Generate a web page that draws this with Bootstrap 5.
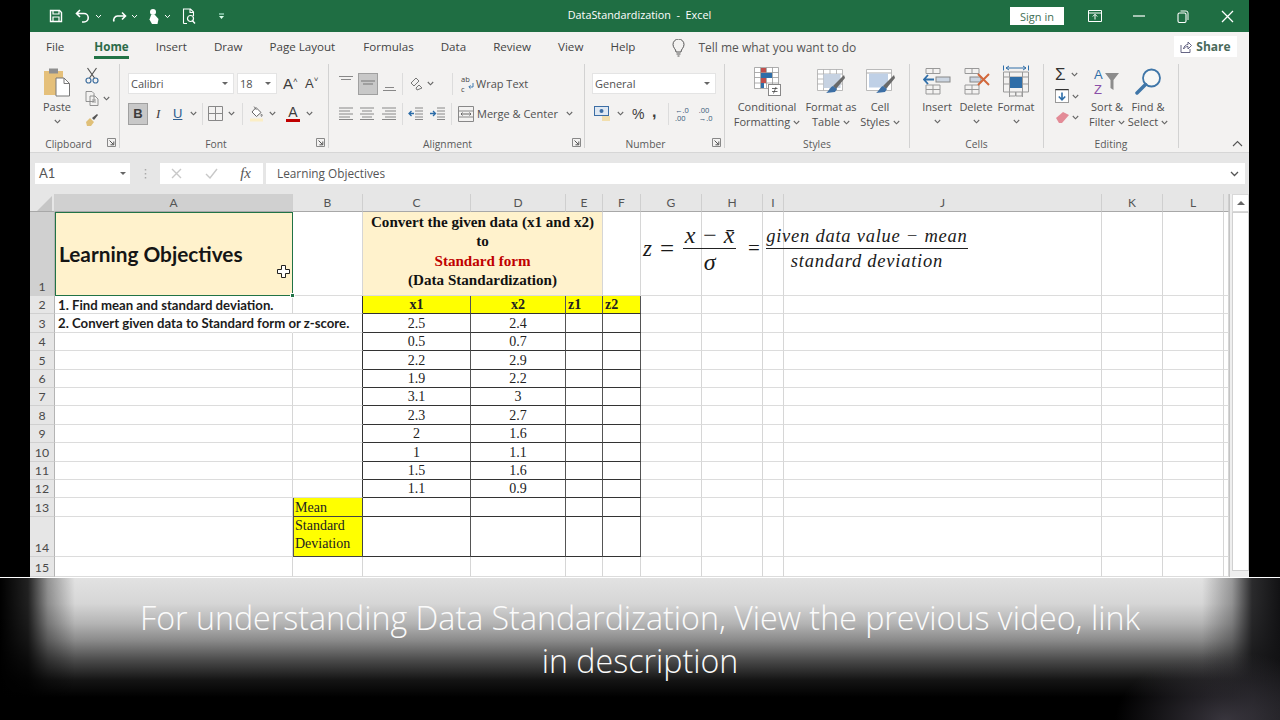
<!DOCTYPE html>
<html lang="en"><head><meta charset="utf-8"><title>DataStandardization - Excel</title>
<link href="https://cdn.jsdelivr.net/npm/bootstrap@5.3.0/dist/css/bootstrap.min.css" rel="stylesheet">
<style>
html,body{margin:0;background:#000;overflow:hidden}
.stage{width:1280px;height:720px;background:#000;font-family:"Open Sans","Noto Sans",sans-serif;color:#444}
.win{width:1219px;height:577px;margin-left:30px;background:#e6e6e6;overflow:hidden;position:relative}
svg{display:block;flex:none}
.cv{width:7px;height:5px}
/* title */
.tbar{height:32px;background:#1f6e43;color:#fff}
.qat{padding-left:19px}
.ttl{position:absolute;left:0;right:0;top:7px;text-align:center;font-size:10.8px;line-height:16px;white-space:pre}
.sign{width:54px;height:18px;background:#fff;color:#3f6f55;font-size:11px;line-height:19px;text-align:center;margin-right:9px}
.wc{width:44px;display:flex;justify-content:center}
/* tabs */
.tabs{height:28px;background:#f3f2f1;font-size:11.6px;color:#444}
.tab{line-height:30px;height:28px;margin-right:27px}
.tab-file{margin-right:30px}
.tab.on{font-weight:700;color:#2b6a48;border-bottom:3px solid #217346;height:27px;line-height:30px}
.tab-fm{margin-left:1px}
.tell{font-size:12px;color:#555;margin-left:13px}
.share{width:63px;height:21px;background:#fff;font-weight:700;color:#4a6a5a;font-size:12px;gap:4px;margin-left:auto;margin-right:12px;margin-top:-7px}
/* ribbon */
.rib{height:93px;background:#f3f2f1;border-bottom:1px solid #d6d6d6;font-size:11px;line-height:15px;color:#505050}
.grp{height:84px;margin-top:4px;border-right:1px solid #d2d2d2;position:relative;flex:none}
.body{height:71px;display:flex}
.glab{height:13px;line-height:13px;font-size:10.3px;text-align:center;color:#5a5a5a;margin-top:3px;white-space:nowrap}
.launch{position:absolute;right:3px;bottom:1px;width:9px;height:9px}
.stack{padding-top:9px;display:flex;flex-direction:column;gap:9px}
.ro{display:flex;align-items:center;height:21px}
.big{display:flex;flex-direction:column;align-items:center;flex:none;white-space:nowrap;text-align:center}
.ic{height:35px;display:flex;align-items:center;justify-content:center}
.big .cv{margin:5px auto 0}
.il{display:inline-block;width:7px;height:5px;vertical-align:1px;margin-left:3px}
.box{background:#fff;height:21px;border:1px solid #e4e4e4;padding-left:2px;line-height:19px;font-size:11px;color:#505050;display:flex;align-items:center;justify-content:space-between;padding-right:5px}
.dn{width:0;height:0;border:3px solid transparent;border-top:3px solid #666;border-bottom:0}
.sel{background:#c8c8c8;border:1px solid #a0a0a0}
.vd{width:1px;height:22px;background:#dcdcdc}
.w-font{width:106px}.w-size{width:40px}.w-gen{width:124px}
.glyph{font-family:"Liberation Sans",sans-serif;color:#3c3c3c;line-height:1}
/* formula */
.fbar{height:41px;padding-top:10px;background:#e6e6e6}
.fb{height:21px;background:#fff;font-size:12px;line-height:21px;color:#555}
.fb-name{width:95px;margin-left:5px;padding:0 4px;font-family:Lato,sans-serif;font-size:13px}
.grip{width:30px;height:21px;display:flex;align-items:center;justify-content:center}
.fb-fx{width:103px;justify-content:space-between;padding:0 12px 0 11px}
.fb-val{width:979px;margin-left:3px;padding:0 6px 0 11px;font-family:"Open Sans",sans-serif;font-size:11.8px}
.fxt{font-family:"Liberation Serif",serif;font-style:italic;font-size:15px;color:#555}
/* sheet */
.sheet{position:relative;height:383px}
.tblx{border-collapse:separate;border-spacing:0;table-layout:fixed;width:1199px;background:#fff;font-family:Lato,sans-serif}
.tblx th,.tblx td{box-sizing:border-box;padding:0;overflow:visible;white-space:nowrap;border-right:1px solid #d6d6d6;border-bottom:1px solid #dcdcdc;line-height:16px}
.tblx thead th{height:18px;background:#e6e6e6;border-bottom:1px solid #a8a8a8;border-right:1px solid #cfcfcf;font-weight:400;font-size:12px;color:#555;text-align:center;vertical-align:middle}
.tblx tbody th{background:#e6e6e6;font-weight:400;font-size:12.3px;color:#4a4a4a;text-align:center;vertical-align:bottom;border-right:1px solid #b4b4b4;border-bottom:1px solid #d0d0d0}
.tblx thead th.pick,.tblx tbody th.pick{background:#d0d0d0}
.corner{width:0;height:0;border-left:15px solid transparent;border-bottom:15px solid #c6c6c6;margin:2px 0 0 7px}
tr.r18{height:18px}tr.r19{height:19px}
.tblx td.a1{background:#fff2cc;border:1.5px solid #217346;position:relative;font-size:20.8px;font-weight:700;color:#151515;padding-left:3px;vertical-align:middle}
.hnd{position:absolute;right:-3px;bottom:-3px;width:5px;height:5px;background:#217346;border:1px solid #fff}
.cur{position:absolute;right:2px;bottom:17px;width:13px;height:13px}
.tblx td.hd{background:#fff2cc;font-family:"Liberation Serif",serif;font-weight:700;font-size:15.1px;line-height:19.1px;text-align:center;color:#111;vertical-align:middle;padding-bottom:4px}
.hd span{color:#c00000}
tr.d td{font-family:"Liberation Serif",serif;font-size:14px;text-align:center;color:#222;vertical-align:middle}
.tblx tr.d td{padding-top:1px}
tr.d td:nth-of-type(2){border-right:1px solid #333}
tr.d td:nth-of-type(n+3):nth-of-type(-n+6){border-bottom:1px solid #333;border-right:1px solid #555}
.tblx tr.d td.ob{font-family:Lato,sans-serif;text-align:left;font-weight:700;font-size:13.2px;color:#1c1c1c;padding-left:3px;padding-top:0}
.tblx tr.d td.nb{border-right-color:transparent}
tr.d td.yl{background:#ff0;font-weight:700;border-bottom:1px solid #444}
tr.d td.yl.lf{text-align:left;padding-left:2px}
.tblx tr.d td.mn{background:#ff0;text-align:left;padding-left:1px;border:1px solid #444;border-top:0;font-size:14px;white-space:normal;border-left:1px solid #555}
.tblx tr.d td.mean{line-height:16px;padding-top:2px;vertical-align:top}
.tblx tr.d td.dev{line-height:18px;padding-bottom:3px;padding-top:0;vertical-align:bottom}
.scr{position:absolute;right:0;top:0;width:20px;height:383px;background:#eee;border-left:1px solid #c4c4c4}
.scr-up{position:absolute;left:2px;right:0;top:0;height:18px;background:#fff;border:1px solid #d8d8d8}
.scr-up i{display:block;width:0;height:0;margin:6px auto;border:4px solid transparent;border-bottom:4px solid #666;border-top:0}
.scr-th{position:absolute;left:2px;right:0;top:18px;height:359px;background:#fff;border:1px solid #d0d0d0}
/* math */
.math{position:absolute;left:613px;top:28px;height:54px;font-family:"Liberation Serif",serif;font-style:italic;color:#1a1a1a;display:flex;align-items:center}
.frac{display:flex;flex-direction:column;align-items:center;justify-content:center;text-align:center;white-space:nowrap}
.frac>div:first-child{border-bottom:1.5px solid #222}
.f1{font-size:24px;width:53px;margin-left:9px}
.f1>div{height:27px;line-height:26px;width:100%}
.f2{font-size:18.5px;width:202px;letter-spacing:.75px}
.f2>div{height:25px;line-height:25px;width:100%}
.zz{font-size:23px}.eq{font-style:normal;font-size:21px}
.eq1{font-size:25px;margin-left:8px}
.eq2{margin-left:12px;margin-right:6px}
/* caption */
.cap{height:143px;width:1280px;border-top:1px solid #fff;text-align:center;color:#fbfbfb;font-family:"Open Sans",sans-serif;font-weight:300;font-size:32.2px;line-height:43px;padding-top:18px;
background:
radial-gradient(110px 70px at 1225px 143px,rgba(70,66,76,.8),rgba(40,40,44,0) 100%),
linear-gradient(90deg,#000 0,rgba(0,0,0,.85) 28px,rgba(0,0,0,.35) 48px,rgba(0,0,0,0) 75px),
linear-gradient(270deg,#121214 0,rgba(18,18,20,.88) 28px,rgba(18,18,20,.35) 48px,rgba(18,18,20,0) 78px),
linear-gradient(180deg,#e2e2e2 0,#d6d6d6 18%,#b4b4b4 32%,#8a8a8a 44%,#4a4a4a 58%,#141414 72%,#000 84%)}
.tq1{margin-left:9px}.tq2{margin-left:10px}.tq3{margin-left:11px}.tq4{margin-left:21px}
.g1{width:90px}.g2{width:209px}.g3{width:256px}.g4{width:140px}.g5{width:185px}.g6{width:134px}.g7{width:135px}
.gl1{padding-right:12px}.gl2{padding-right:16px}.gl3{padding-right:18px}.gl4{padding-right:18px}
.b-paste{width:32px;margin-left:11px}
.tools{margin-left:12px;padding-top:3px}.tcopy{margin-top:7px}.tbr{margin-top:7px}
.ps8{padding-left:8px}.ps10{padding-left:10px}.ps7{padding-left:7px}.ps6{padding-left:6px}.ps65{padding-left:6px}.ps11{padding-left:11px}
.ms3{margin-left:3px}
.m2{margin-left:2px}.m3{margin-left:3px}.m4{margin-left:4px}.m5{margin-left:5px}.m6{margin-left:6px}.m7{margin-left:7px}.m8{margin-left:8px}.m10{margin-left:10px}.m18{margin-left:18px}
.a-up{font-size:15px;margin-left:6px;width:22px}.a-dn{font-size:13px;width:14px}.a-up sup,.a-dn sup{font-size:8px;top:-.7em}
.fbtn{width:20px;height:22px;font-size:13px;line-height:20px;text-align:center}
.fi{font-style:italic;font-size:13px;font-family:"Liberation Serif",serif;margin-left:8px;width:10px}
.fu{font-size:13px;text-decoration:underline;margin-left:7px;width:12px;color:#2f5f8f}
.fc{font-size:14px;display:inline-block;border-bottom:3px solid #c00000;line-height:13px;height:17px;width:14px;text-align:center}
.abtn{width:20px;height:22px;display:flex;align-items:center;justify-content:center}
.abw{font-size:7.5px;line-height:10px;color:#444;width:9px}
.dec{font-size:7.5px;line-height:8px;color:#3a5a7a;white-space:nowrap}
.npc{font-size:14px;margin-left:8px;width:12px}.ncm{font-size:16px;margin-left:8px;width:6px;margin-top:-4px}
.b72{width:72px}.b56{width:56px}.b42{width:42px}.b36{width:36px}.b44{width:44px}.b40{width:40px}
.ic-s{align-items:flex-start;padding-top:4px}
.ecol{width:32px}.e1{height:18px;margin-top:1px}.e2{margin-top:4px;height:18px}.e3{margin-top:3px;height:18px}
.sig{font-size:17px;line-height:1;color:#333;font-family:"Liberation Sans",sans-serif;width:13px}
.tl-wrap{margin-left:10px;height:31px}
.colps{padding:0 6px 5px 0}
.c25{width:25px}.c238{width:238px}.c70{width:70px}.c108{width:108px}.c95{width:95px}.c37{width:37px}.c38{width:38px}.c61{width:61px}.c21{width:21px}.c318{width:318px}.c5{width:5px}
.r84{height:84px}.r40{height:40px}.r20{height:20px}
.wrapic{margin:6px 0 0 -2px}
</style></head>
<body>
<svg width="0" height="0" class="position-absolute"><defs>
<symbol id="cv" viewBox="0 0 7 5"><path d="M.8 1 3.5 3.8 6.2 1" fill="none" stroke="#666" stroke-width="1.1"/></symbol>
<symbol id="cw" viewBox="0 0 7 5"><path d="M1 1 3.5 3.6 6 1" fill="none" stroke="#fff" stroke-width="1"/></symbol>
<symbol id="la" viewBox="0 0 9 9"><path d="M.5 8.5V.5h8v8z" fill="none" stroke="#888"/><path d="M2.5 2.5 6.5 6.5M6.8 3.5v3.3H3.5" fill="none" stroke="#555"/></symbol>
</defs></svg>
<div class="stage">
<div class="win">
 <div class="tbar d-flex align-items-center qat">
  <svg width="14" height="14" viewBox="0 0 14 14" class="me-2"><path d="M1.5 1.5h9l2 2v9h-11z" fill="none" stroke="#fff" stroke-width="1.4"/><path d="M4 1.5v3.5h6V1.5M4 12.5V8h6v4.5" fill="none" stroke="#fff" stroke-width="1.2"/></svg>
  <svg width="16" height="14" viewBox="0 0 16 14" class="ms-1"><path d="M5 1 1.5 4.5 5 8M2 4.5h7a4 4 0 0 1 0 8.5H7" fill="none" stroke="#fff" stroke-width="1.6"/></svg>
  <svg width="7" height="5" class="cv ms-1"><use href="#cw"/></svg>
  <svg width="16" height="14" viewBox="0 0 16 14" class="tq1"><path d="M11 3.5l3.5 3.5L11 10.5M14 7H6.5A4 4 0 0 0 3 12.5" fill="none" stroke="#fff" stroke-width="1.6"/></svg>
  <svg width="7" height="5" class="cv ms-1"><use href="#cw"/></svg>
  <svg width="12" height="17" viewBox="0 0 12 17" class="tq2"><circle cx="5" cy="4" r="3" fill="#fff"/><path d="M3 7h4l3.5 4-1 5H4L1.500 11.500z" fill="#fff"/></svg>
  <svg width="7" height="5" class="cv ms-1"><use href="#cw"/></svg>
  <svg width="15" height="17" viewBox="0 0 15 17" class="tq3"><path d="M1.500 15.500V1h7l3 3v4M8 1v3.500h3.500M1.500 15.500H5" fill="none" stroke="#fff" stroke-width="1.1"/><circle cx="8.500" cy="10.500" r="3" fill="none" stroke="#fff" stroke-width="1.200"/><path d="M10.500 12.800 13 15.500" stroke="#fff" stroke-width="1.400"/></svg>
  <svg width="7" height="7" viewBox="0 0 7 7" class="tq4"><path d="M1 1h5" stroke="#cfe" stroke-width="1"/><path d="M1 3h5L3.500 6z" fill="#dfe"/></svg>
  <div class="ttl">DataStandardization  -  Excel</div>
  <div class="ms-auto d-flex align-items-center sr">
   <div class="sign">Sign in</div>
   <div class="wc"><svg width="14" height="12" viewBox="0 0 14 12"><path d="M.5.5h13v11H.5zM.5 3h13" fill="none" stroke="#fff"/><path d="M7 9.500V4.500M4.800 6.500 7 4.300 9.200 6.500" fill="none" stroke="#fff"/></svg></div>
   <div class="wc"><svg width="12" height="2" viewBox="0 0 12 2"><path d="M0 1h12" stroke="#fff" stroke-width="1.200"/></svg></div>
   <div class="wc"><svg width="12" height="13" viewBox="0 0 12 13"><rect x="1" y="3" width="8" height="9.500" rx="1.500" fill="none" stroke="#fff" stroke-width="1.100"/><path d="M3.500 1h5.500a2 2 0 0 1 2 2v7" fill="none" stroke="#fff" stroke-width="1"/></svg></div>
   <div class="wc"><svg width="13" height="13" viewBox="0 0 13 13"><path d="M1 1 12 12M12 1 1 12" stroke="#fff" stroke-width="1.300"/></svg></div>
  </div>
 </div>
 <div class="tabs d-flex ps-3">
  <div class="tab tab-file">File</div><div class="tab on">Home</div><div class="tab">Insert</div><div class="tab">Draw</div><div class="tab">Page Layout</div><div class="tab tab-fm">Formulas</div><div class="tab">Data</div><div class="tab">Review</div><div class="tab">View</div><div class="tab">Help</div>
  <div class="d-flex align-items-center tl-wrap">
   <svg width="13" height="18" viewBox="0 0 13 18"><path d="M4 13c0-3-3-4-3-7.500a5.500 5.500 0 0 1 11 0C12 9 9 10 9 13zM4.500 15h4M5.500 17h2" fill="none" stroke="#555" stroke-width="1"/></svg>
   <div class="tell">Tell me what you want to do</div>
  </div>
  <div class="share d-flex align-items-center justify-content-center mt-1">
   <svg width="12" height="12" viewBox="0 0 12 12"><path d="M1 4v7.500h9V8M3.500 8C4 5 6 3.500 8 3.500V1l3.500 3.500L8 8V5.500C6 5.500 4.500 6.500 3.500 8z" fill="none" stroke="#557" stroke-width=".9"/></svg>Share
  </div>
 </div>
 <div class="rib d-flex">
  <!-- Clipboard -->
  <div class="grp g1"><div class="body">
    <div class="big b-paste"><div class="ic"><svg width="28" height="30" viewBox="0 0 28 30"><rect x="1" y="4" width="19" height="24" fill="#e5c07a"/><rect x="6" y="1.500" width="9" height="5" fill="#8f8f8f"/><path d="M13 11h8l5.500 5.500V29H13z" fill="#fff" stroke="#777"/><path d="M21 11v5.500h5.500" fill="none" stroke="#777"/></svg></div>
     <div>Paste</div><svg class="cv"><use href="#cv"/></svg></div>
    <div class="d-flex flex-column tools">
     <svg width="14" height="17" viewBox="0 0 14 17"><path d="M2.500 1 9.500 11M11.500 1 4.500 11" stroke="#555" stroke-width="1.200"/><circle cx="3.500" cy="13.500" r="2.500" fill="none" stroke="#3f6f9f" stroke-width="1.200"/><circle cx="10.500" cy="13.500" r="2.500" fill="none" stroke="#3f6f9f" stroke-width="1.200"/></svg>
     <div class="d-flex align-items-center tcopy"><svg width="14" height="15" viewBox="0 0 14 15"><path d="M1 .5h6l2 2v8H1zM5 5h5l3 3v6.500H5z" fill="#f3f2f1" stroke="#888" stroke-width=".9"/><path d="M7 9h4M7 11h4" stroke="#999"/></svg><svg class="cv ms-1"><use href="#cv"/></svg></div>
     <svg class="tbr" width="14" height="14" viewBox="0 0 14 14"><path d="M1 9l4-4 4 4-3 4H2z" fill="#e0c078"/><path d="M7 5l5-4 1 1-4 5z" fill="#555"/></svg>
    </div>
   </div>
   <div class="glab gl1">Clipboard</div><svg class="launch"><use href="#la"/></svg></div>
  <!-- Font -->
  <div class="grp g2"><div class="body stack ps8">
    <div class="ro"><div class="box w-font">Calibri<i class="dn"></i></div><div class="box w-size ms3">18<i class="dn"></i></div>
     <span class="glyph a-up">A<sup>˄</sup></span><span class="glyph a-dn">A<sup>˅</sup></span></div>
    <div class="ro"><div class="sel fbtn glyph fw-bold">B</div><span class="glyph fi">I</span><span class="glyph fu">U</span><svg class="cv m5"><use href="#cv"/></svg><div class="vd m5"></div>
     <svg class="m5" width="15" height="15" viewBox="0 0 15 15"><path d="M.5.5h14v14H.5zM7.500.5v14M.5 7.500h14" fill="none" stroke="#888"/></svg><svg class="cv m5"><use href="#cv"/></svg><div class="vd m7"></div>
     <svg class="m6" width="15" height="17" viewBox="0 0 15 17"><path d="M3 7 7 2.500 12 7.500 7.500 11.500z" fill="#fff" stroke="#666"/><path d="M5 1.500 7.500 5M12.500 9c.8 1 1 2 .3 2.400S11.800 10 12.500 9z" fill="none" stroke="#666" stroke-width=".8"/><path d="M1 15h13" stroke="#fbeec5" stroke-width="3"/></svg><svg class="cv m5"><use href="#cv"/></svg>
     <span class="fc m10"><span class="glyph">A</span></span><svg class="cv m6"><use href="#cv"/></svg></div>
   </div>
   <div class="glab gl2">Font</div><svg class="launch"><use href="#la"/></svg></div>
  <!-- Alignment -->
  <div class="grp g3"><div class="body stack ps10">
    <div class="ro"><svg width="14" height="21" viewBox="0 0 14 21"><path d="M0 3.500h14M2 6.500h10" stroke="#888"/></svg><div class="sel abtn m5"><svg width="14" height="7" viewBox="0 0 14 7"><path d="M0 1h14M2 4h10" stroke="#777"/></svg></div>
     <svg class="m5" width="13" height="21" viewBox="0 0 13 21"><path d="M2 14.500h9M0 17.500h13" stroke="#888"/></svg><div class="vd m6"></div>
     <svg class="m6" width="14" height="14" viewBox="0 0 14 14"><path d="M2 6 7 1l3 3-5 5zM7 11l3-3 3 3-5 2z" fill="none" stroke="#777"/></svg><svg class="cv m4"><use href="#cv"/></svg><div class="vd m18"></div>
     <span class="abw m8">ab<br>c</span><svg class="wrapic" width="6" height="7" viewBox="0 0 6 7"><path d="M5 0v4H1M2.500 2.300.8 4l1.700 1.700" fill="none" stroke="#2f6ea8" stroke-width=".9"/></svg><span class="m2">Wrap Text</span></div>
    <div class="ro"><svg width="14" height="13" viewBox="0 0 14 13"><path d="M0 1h14M0 4h11M0 7h14M0 10h11M0 12.500h14" stroke="#888"/></svg>
     <svg class="m7" width="14" height="13" viewBox="0 0 14 13"><path d="M0 1h14M2 4h10M0 7h14M2 10h10M0 12.500h14" stroke="#888"/></svg>
     <svg class="m8" width="14" height="13" viewBox="0 0 14 13"><path d="M0 1h14M3 4h11M0 7h14M3 10h11M0 12.500h14" stroke="#888"/></svg><div class="vd m6"></div>
     <svg class="m5" width="15" height="13" viewBox="0 0 15 13"><path d="M7 1h8M7 4h8M7 7h8M7 10h8M7 12.500h8" stroke="#888"/><path d="M6 6.500H1M3.500 4 1 6.500 3.500 9" fill="none" stroke="#2b6ca8" stroke-width="1.300"/></svg>
     <svg class="m7" width="15" height="13" viewBox="0 0 15 13"><path d="M7 1h8M7 4h8M7 7h8M7 10h8M7 12.500h8" stroke="#888"/><path d="M0 6.500h5M3 4l2.500 2.500L3 9" fill="none" stroke="#2b6ca8" stroke-width="1.300"/></svg><div class="vd m6"></div>
     <svg class="m6" width="16" height="16" viewBox="0 0 16 16"><path d="M.5.5h15v15H.5zM.5 5h15M.5 11h15" fill="none" stroke="#888"/><path d="M3 8h10M3 8l1.500-1.500M3 8l1.500 1.500M13 8l-1.500-1.500M13 8l-1.500 1.500" fill="none" stroke="#666"/></svg><span class="m3">Merge &amp; Center</span><svg class="cv m8"><use href="#cv"/></svg></div>
   </div>
   <div class="glab gl3">Alignment</div><svg class="launch"><use href="#la"/></svg></div>
  <!-- Number -->
  <div class="grp g4"><div class="body stack ps7">
    <div class="ro"><div class="box w-gen">General<i class="dn"></i></div></div>
    <div class="ro"><svg class="m2" width="17" height="16" viewBox="0 0 17 16"><rect x=".5" y=".5" width="14" height="9" fill="#dfe8f2" stroke="#3c6ea5"/><circle cx="7.500" cy="5" r="2" fill="#3c6ea5"/><rect x="8" y="10" width="8" height="5" fill="#f2dfae"/></svg><svg class="cv m6"><use href="#cv"/></svg><span class="glyph npc">%</span><span class="glyph ncm fw-bold">,</span><div class="vd m10"></div>
      <span class="dec m6">←.0<br>.00</span><span class="dec m10">.00<br>→.0</span></div>
   </div>
   <div class="glab gl4">Number</div><svg class="launch"><use href="#la"/></svg></div>
  <!-- Styles -->
  <div class="grp g5"><div class="body ps6">
    <div class="big b72"><div class="ic"><svg width="27" height="29" viewBox="0 0 27 29"><path d="M.5.500h24v21H.500zM.5 5.500h24M.5 10.500h24M.5 16h24M6.500.5v21M12.500.5v21M18.500.5v21" fill="#fff" stroke="#999" stroke-width=".8"/><rect x="7" y="1" width="5" height="4.500" fill="#c0504d"/><rect x="7" y="6" width="11" height="5" fill="#2f6ea8"/><rect x="7" y="11" width="5" height="5" fill="#c0504d"/><rect x="7" y="16" width="3" height="5" fill="#2f6ea8"/><rect x="14.500" y="17.500" width="12" height="11" fill="#fff" stroke="#888"/><path d="M18 21.500h5.500M18 24.500h5.500M22 20l-2.500 6.500" stroke="#444" stroke-width=".8"/></svg></div><div>Conditional</div><div>Formatting<svg class="il d-inline-block"><use href="#cv"/></svg></div></div>
    <div class="big b56"><div class="ic"><svg width="28" height="26" viewBox="0 0 28 26"><path d="M.5.500h25v21H.500zM.5 5h25M.5 10h25M.5 15h25M6.500.5v21M13 .5v21M19.500.5v21" fill="#fff" stroke="#aaa" stroke-width=".8"/><rect x="6.500" y="5" width="17" height="14" fill="#c6d2e2"/><path d="M27 6 16 17l3 3L28 9z" fill="#6a6a6a"/><path d="M16 17c-3 1-4 5-7 7l9-1 2-3z" fill="#3d6fa5"/></svg></div><div>Format as</div><div>Table<svg class="il d-inline-block"><use href="#cv"/></svg></div></div>
    <div class="big b42"><div class="ic"><svg width="29" height="26" viewBox="0 0 29 26"><path d="M.5.500h25v21H.500z" fill="#fff" stroke="#aaa" stroke-width=".8"/><path d="M.5 4h25" stroke="#aaa"/><rect x="3" y="4.500" width="19" height="14" fill="#bfd0e6"/><path d="M28 6 17 17l3 3L29 9z" fill="#6a6a6a"/><path d="M17 17c-3 1-4 5-7 7l9-1 2-3z" fill="#3d6fa5"/></svg></div><div>Cell</div><div>Styles<svg class="il d-inline-block"><use href="#cv"/></svg></div></div>
   </div>
   <div class="glab">Styles</div></div>
  <!-- Cells -->
  <div class="grp g6"><div class="body ps65">
    <div class="big b42"><div class="ic"><svg width="28" height="27" viewBox="0 0 28 27"><path d="M3 .5h14v5H3zM10 .5v5M3 17h14v9H3zM3 21.500h14M10 17v9" fill="none" stroke="#999"/><rect x="13" y="9" width="14" height="5" fill="#ccd6e2" stroke="#888"/><path d="M11 11.500H1M5 7 1 11.500 5 16" fill="none" stroke="#2f6ea8" stroke-width="1.800"/></svg></div><div>Insert</div><svg class="cv"><use href="#cv"/></svg></div>
    <div class="big b36"><div class="ic"><svg width="28" height="27" viewBox="0 0 28 27"><path d="M3 .5h14v5H3zM10 .5v5M3 17h14v9H3zM3 21.500h14M10 17v9" fill="none" stroke="#999"/><rect x="8" y="9" width="11" height="5" fill="#ccd6e2" stroke="#888"/><path d="M16 6l11 11M27 6 16 17" stroke="#d2683c" stroke-width="2"/></svg></div><div>Delete</div><svg class="cv"><use href="#cv"/></svg></div>
    <div class="big b44"><div class="ic"><svg width="27" height="33" viewBox="0 0 27 33"><path d="M.5 7h25v20H.500zM.5 12h25M.5 19h25M6.500 7v25M19.500 7v25M6.500 27v4h6v-4M13 27v4h6v-4" fill="none" stroke="#999"/><rect x="7" y="12" width="12" height="11" fill="#2f6ea8"/><path d="M3 3h20M3 3l3-2M3 3l3 2M23 3l-3-2M23 3l-3 2M.5.500v5M25.500.5v5" fill="none" stroke="#2f6ea8"/></svg></div><div>Format</div><svg class="cv"><use href="#cv"/></svg></div>
   </div>
   <div class="glab">Cells</div></div>
  <!-- Editing -->
  <div class="grp g7"><div class="body ps11">
    <div class="d-flex flex-column ecol">
     <div class="d-flex align-items-center e1"><span class="sig">Σ</span><svg class="cv m3"><use href="#cv"/></svg></div>
     <div class="d-flex align-items-center e2"><svg width="14" height="14" viewBox="0 0 14 14"><rect x=".5" y=".5" width="13" height="13" fill="#fff" stroke="#999"/><path d="M.5.5h13" stroke="#333" stroke-width="1.500"/><path d="M7 3.500v7M3.800 7.500 7 10.800 10.200 7.500" fill="none" stroke="#2f6ea8" stroke-width="1.600"/></svg><svg class="cv m3"><use href="#cv"/></svg></div>
     <div class="d-flex align-items-center e3"><svg width="15" height="13" viewBox="0 0 15 13"><path d="M1 7 8 1l6 3-7 8H4z" fill="#e38b97"/></svg><svg class="cv m2"><use href="#cv"/></svg></div>
    </div>
    <div class="big b40"><div class="ic ic-s"><svg width="28" height="28" viewBox="0 0 28 28"><text x="1" y="11" font-family="Liberation Sans" font-size="13" fill="#2f6ea8">A</text><text x="1" y="26" font-family="Liberation Sans" font-size="13" fill="#8a4fa8">Z</text><path d="M12 5h14l-5.500 7v10l-3-2v-8z" fill="#8c8c8c"/></svg></div><div>Sort &amp;</div><div>Filter<svg class="il d-inline-block"><use href="#cv"/></svg></div></div>
    <div class="big b42"><div class="ic ic-s"><svg width="27" height="27" viewBox="0 0 27 27"><circle cx="16.500" cy="10" r="8.500" fill="#f7f7f5" stroke="#3f76a8" stroke-width="1.800"/><path d="M10.500 16.500 2 25" stroke="#3f76a8" stroke-width="3.500" stroke-linecap="round"/></svg></div><div>Find &amp;</div><div>Select<svg class="il d-inline-block"><use href="#cv"/></svg></div></div>
   </div>
   <div class="glab">Editing</div></div>
  <div class="flex-fill d-flex justify-content-end align-items-end colps"><svg width="11" height="7" viewBox="0 0 11 7"><path d="M1 6 5.500 1.500 10 6" fill="none" stroke="#555" stroke-width="1.100"/></svg></div>
 </div>
 <div class="fbar d-flex">
  <div class="fb fb-name d-flex align-items-center justify-content-between">A1<i class="dn"></i></div>
  <div class="grip"><svg width="3" height="12" viewBox="0 0 3 12"><path d="M1.500 1v1.500M1.500 5v1.500M1.500 9v1.500" stroke="#aaa" stroke-width="1.500"/></svg></div>
  <div class="fb fb-fx d-flex align-items-center">
   <svg width="11" height="11" viewBox="0 0 11 11"><path d="M1 1l9 9M10 1 1 10" stroke="#c8c8c8" stroke-width="1.400"/></svg>
   <svg width="13" height="11" viewBox="0 0 13 11"><path d="M1 6l4 4 7-9" fill="none" stroke="#c8c8c8" stroke-width="1.400"/></svg>
   <span class="fxt">fx</span></div>
  <div class="fb fb-val d-flex align-items-center justify-content-between">Learning Objectives<svg width="9" height="6" viewBox="0 0 9 6"><path d="M1 1l3.500 3.500L8 1" fill="none" stroke="#555" stroke-width="1.300"/></svg></div>
 </div>
 <div class="sheet">
  <table class="tblx">
   <colgroup><col class="c25"><col class="c238"><col class="c70"><col class="c108"><col class="c95"><col class="c37"><col class="c38"><col class="c61"><col class="c61"><col class="c21"><col class="c318"><col class="c61"><col class="c61"><col class="c5"></colgroup>
   <thead><tr><th><div class="corner"></div></th><th class="pick">A</th><th>B</th><th>C</th><th>D</th><th>E</th><th>F</th><th>G</th><th>H</th><th>I</th><th>J</th><th>K</th><th>L</th><th></th></tr></thead>
   <tbody>
    <tr class="r84"><th class="pick">1</th><td class="a1">Learning Objectives<svg class="cur" viewBox="0 0 13 13"><path d="M4.500.5h4v4h4v4h-4v4h-4v-4h-4v-4h4z" fill="#fff" stroke="#222"/></svg><i class="hnd"></i></td><td></td><td colspan="3" class="hd">Convert the given data (x1 and x2)<br>to<br><span>Standard form</span><br>(Data Standardization)</td><td></td><td></td><td></td><td></td><td></td><td></td><td></td><td></td></tr>
    <tr class="d r18"><th>2</th><td class="ob">1. Find mean and standard deviation.</td><td></td><td class="yl">x1</td><td class="yl">x2</td><td class="yl lf">z1</td><td class="yl lf">z2</td><td></td><td></td><td></td><td></td><td></td><td></td><td></td></tr>
    <tr class="d r19"><th>3</th><td class="ob nb">2. Convert given data to Standard form or z-score.</td><td></td><td>2.5</td><td>2.4</td><td></td><td></td><td></td><td></td><td></td><td></td><td></td><td></td><td></td></tr>
    <tr class="d r18"><th>4</th><td></td><td></td><td>0.5</td><td>0.7</td><td></td><td></td><td></td><td></td><td></td><td></td><td></td><td></td><td></td></tr>
    <tr class="d r19"><th>5</th><td></td><td></td><td>2.2</td><td>2.9</td><td></td><td></td><td></td><td></td><td></td><td></td><td></td><td></td><td></td></tr>
    <tr class="d r18"><th>6</th><td></td><td></td><td>1.9</td><td>2.2</td><td></td><td></td><td></td><td></td><td></td><td></td><td></td><td></td><td></td></tr>
    <tr class="d r18"><th>7</th><td></td><td></td><td>3.1</td><td>3</td><td></td><td></td><td></td><td></td><td></td><td></td><td></td><td></td><td></td></tr>
    <tr class="d r19"><th>8</th><td></td><td></td><td>2.3</td><td>2.7</td><td></td><td></td><td></td><td></td><td></td><td></td><td></td><td></td><td></td></tr>
    <tr class="d r18"><th>9</th><td></td><td></td><td>2</td><td>1.6</td><td></td><td></td><td></td><td></td><td></td><td></td><td></td><td></td><td></td></tr>
    <tr class="d r19"><th>10</th><td></td><td></td><td>1</td><td>1.1</td><td></td><td></td><td></td><td></td><td></td><td></td><td></td><td></td><td></td></tr>
    <tr class="d r18"><th>11</th><td></td><td></td><td>1.5</td><td>1.6</td><td></td><td></td><td></td><td></td><td></td><td></td><td></td><td></td><td></td></tr>
    <tr class="d r18"><th>12</th><td></td><td></td><td>1.1</td><td>0.9</td><td></td><td></td><td></td><td></td><td></td><td></td><td></td><td></td><td></td></tr>
    <tr class="d r19"><th>13</th><td></td><td class="mn mean">Mean</td><td></td><td></td><td></td><td></td><td></td><td></td><td></td><td></td><td></td><td></td><td></td></tr>
    <tr class="d r40"><th>14</th><td></td><td class="mn dev">Standard Deviation</td><td></td><td></td><td></td><td></td><td></td><td></td><td></td><td></td><td></td><td></td><td></td></tr>
    <tr class="r20"><th>15</th><td></td><td></td><td></td><td></td><td></td><td></td><td></td><td></td><td></td><td></td><td></td><td></td><td></td></tr>
   </tbody>
  </table>
  <div class="math"><span class="zz">z</span><span class="eq eq1">=</span>
   <div class="frac f1"><div>x − x̄</div><div>σ</div></div>
   <span class="eq eq2">=</span>
   <div class="frac f2"><div>given data value − mean</div><div>standard deviation</div></div>
  </div>
  <div class="scr"><div class="scr-th"></div><div class="scr-up"><i></i></div></div>
 </div>
</div>
<div class="cap">For understanding Data Standardization, View the previous video, link<br>in description</div>
</div>
</body></html>
